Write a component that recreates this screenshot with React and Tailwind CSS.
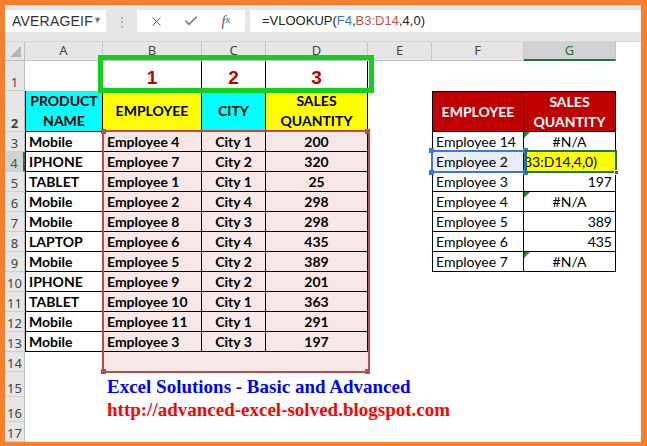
import { X, Check } from "lucide-react";

const cal = { fontFamily: "Lato, 'Open Sans', sans-serif" };

const data = [
  ["Mobile", "Employee 4", "City 1", "200"],
  ["IPHONE", "Employee 7", "City 2", "320"],
  ["TABLET", "Employee 1", "City 1", "25"],
  ["Mobile", "Employee 2", "City 4", "298"],
  ["Mobile", "Employee 8", "City 3", "298"],
  ["LAPTOP", "Employee 6", "City 4", "435"],
  ["Mobile", "Employee 5", "City 2", "389"],
  ["IPHONE", "Employee 9", "City 2", "201"],
  ["TABLET", "Employee 10", "City 1", "363"],
  ["Mobile", "Employee 11", "City 1", "291"],
  ["Mobile", "Employee 3", "City 3", "197"],
];

// right lookup table: [name, value, align, error flag]
const lookup = [
  ["Employee 14", "#N/A", "center", true],
  ["Employee 2", null, "left", false],
  ["Employee 3", "197", "right", false],
  ["Employee 4", "#N/A", "center", true],
  ["Employee 5", "389", "right", false],
  ["Employee 6", "435", "right", false],
  ["Employee 7", "#N/A", "center", true],
];

function RowHead({ n, active }) {
  return (
    <div
      className={`w-[20px] shrink-0 flex items-end justify-center pb-[1px] text-[13px] leading-none border-b border-[#cfcfcf] ${
        active
          ? "bg-[#d2d2d2] text-[#217346] border-r-2 border-r-[#217346]"
          : "bg-[#e6e6e6] text-[#444] border-r border-r-[#bfbfbf]"
      }`}
      style={{ fontFamily: "'Noto Sans', sans-serif" }}
    >
      {n}
    </div>
  );
}

function ErrFlag() {
  return (
    <span className="absolute left-0 top-0 w-0 h-0 border-t-[6px] border-r-[6px] border-t-[#1f8a2e] border-r-transparent" />
  );
}

function FormulaBar() {
  return (
    <div className="h-[37px] shrink-0 bg-[#e6e6e6] flex items-start pt-[5px] border-b border-[#d6d6d6]">
      <div className="w-[101px] h-[22px] bg-white flex items-center pl-[7px] pr-[5px] text-[14px] text-[#333]" style={{ fontFamily: "'Liberation Sans', sans-serif" }}>
        <span className="flex-1 tracking-[0.2px]">AVERAGEIF</span>
        <span className="text-[9px] text-[#777]">▼</span>
      </div>
      <div className="w-[31px] h-[22px] flex items-center justify-center text-[#a8a8a8] text-[14px]">⋮</div>
      <div className="w-[108px] h-[22px] bg-white flex items-center">
        <div className="w-[38px] flex justify-center">
          <X size={15} strokeWidth={1.6} color="#6a6a6a" />
        </div>
        <div className="w-[32px] flex justify-center">
          <Check size={16} strokeWidth={2.4} color="#7a7a7a" />
        </div>
        <div className="w-[38px] flex justify-center text-[14px] italic text-[#555]" style={{ fontFamily: "'Liberation Serif', serif" }}>
          f<span className="text-[11px]">x</span>
        </div>
      </div>
      <div className="ml-[5px] flex-1 h-[22px] bg-white flex items-center pl-[12px] text-[13px] text-[#222]" style={{ fontFamily: "'Liberation Sans', sans-serif" }}>
        =VLOOKUP(<span className="text-[#3b6fc6]">F4</span>,<span className="text-[#c0504d]">B3:D14</span>,4,0)
      </div>
    </div>
  );
}

function ColHeaders() {
  const letters = [
    ["A", "w-[78px]"],
    ["B", "w-[99px]"],
    ["C", "w-[64px]"],
    ["D", "w-[102px]"],
    ["E", "w-[64px]"],
    ["F", "w-[92px]"],
  ];
  return (
    <div className="h-[19px] shrink-0 flex text-[13px] text-[#444]" style={{ fontFamily: "'Noto Sans', sans-serif" }}>
      <div className="w-[20px] shrink-0 bg-[#e6e6e6] border-r border-b border-[#bfbfbf] relative">
        <span className="absolute right-[3px] bottom-[3px] w-0 h-0 border-b-[11px] border-l-[11px] border-b-[#b5b5b5] border-l-transparent" />
      </div>
      {letters.map(([l, w]) => (
        <div key={l} className={`${w} shrink-0 bg-[#e6e6e6] border-r border-b border-[#c6c6c6] flex items-center justify-center`}>
          {l}
        </div>
      ))}
      <div className="w-[92px] shrink-0 bg-[#d2d2d2] border-r border-[#c6c6c6] border-b-2 border-b-[#217346] flex items-center justify-center text-[#217346]">
        G
      </div>
      <div className="flex-1 bg-white" />
    </div>
  );
}

export default function App() {
  return (
    <div className="w-[647px] h-[446px] bg-[#f8802a] pt-[5px] pl-[5px] pr-[6px] pb-[4px] relative overflow-hidden">
      <div className="w-full h-full bg-white flex flex-col overflow-hidden text-black" style={cal}>
        <FormulaBar />
        <ColHeaders />

        {/* row 1 */}
        <div className="h-[30px] shrink-0 flex">
          <RowHead n={1} />
          <div className="w-[78px] shrink-0" />
          {[
            ["1", "w-[99px]"],
            ["2", "w-[64px]"],
            ["3", "w-[102px]"],
          ].map(([n, w]) => (
            <div
              key={n}
              className={`${w} shrink-0 border-r border-b border-black flex items-center justify-center pt-[5px] text-[19px] font-bold text-[#c00000]`}
              style={{ fontFamily: "'Liberation Sans', Arial, sans-serif" }}
            >
              {n}
            </div>
          ))}
        </div>

        {/* row 2 */}
        <div className="h-[41px] shrink-0 flex text-[14px] font-bold leading-[20px]">
          <RowHead n={2} />
          <div className="w-[78px] shrink-0 bg-[#00ffff] border-l border-r border-b border-black flex flex-col items-center justify-center">
            <span>PRODUCT</span>
            <span>NAME</span>
          </div>
          <div className="w-[99px] shrink-0 bg-[#ffff00] border-r border-b border-black flex items-center justify-center">
            EMPLOYEE
          </div>
          <div className="w-[64px] shrink-0 bg-[#00ffff] border-r border-b border-black flex items-center justify-center">
            CITY
          </div>
          <div className="w-[102px] shrink-0 bg-[#ffff00] border-r border-b border-black flex flex-col items-center justify-center">
            <span>SALES</span>
            <span>QUANTITY</span>
          </div>
          <div className="w-[64px] shrink-0" />
          <div className="w-[92px] shrink-0 bg-[#c00000] text-white border border-black flex items-center justify-center">
            EMPLOYEE
          </div>
          <div className="w-[92px] shrink-0 bg-[#c00000] text-white border-t border-r border-b border-black flex flex-col items-center justify-center">
            <span>SALES</span>
            <span>QUANTITY</span>
          </div>
        </div>

        {/* rows 3 - 13 */}
        {data.map(([a, b, c, d], i) => {
          const lk = lookup[i];
          return (
            <div key={i} className="h-[20px] shrink-0 flex text-[14px]">
              <RowHead n={i + 3} active={i === 1} />
              <div className="w-[78px] shrink-0 border-l border-r border-b border-black font-bold pl-[3px] flex items-center">{a}</div>
              <div className="w-[99px] shrink-0 bg-[#f8e7e7] border-r border-b border-black font-bold pl-[4px] flex items-center">{b}</div>
              <div className="w-[64px] shrink-0 bg-[#f8e7e7] border-r border-b border-black font-bold flex items-center justify-center">{c}</div>
              <div className="w-[102px] shrink-0 bg-[#f8e7e7] border-r border-b border-black font-bold flex items-center justify-center">{d}</div>
              <div className="w-[64px] shrink-0" />
              {lk ? (
                <>
                  <div className={`w-[92px] shrink-0 border-l border-r border-b border-black pl-[3px] flex items-center ${i === 1 ? "bg-[#e8eefa]" : ""}`}>
                    {lk[0]}
                  </div>
                  <div
                    className={`w-[92px] shrink-0 border-r border-b border-black relative flex items-center px-[3px] ${
                      lk[2] === "center" ? "justify-center" : lk[2] === "right" ? "justify-end" : "justify-start"
                    } ${i === 1 ? "bg-[#ffff00]" : ""}`}
                  >
                    {lk[3] && <ErrFlag />}
                    {lk[1]}
                  </div>
                </>
              ) : (
                <div className="w-[184px] shrink-0" />
              )}
            </div>
          );
        })}

        {/* row 14 */}
        <div className="h-[20px] shrink-0 flex">
          <RowHead n={14} />
          <div className="w-[78px] shrink-0" />
          <div className="w-[265px] shrink-0 bg-[#f8e7e7]" />
        </div>

        {/* rows 15, 16 */}
        <div className="h-[25px] shrink-0 flex">
          <RowHead n={15} />
          <div className="w-[78px] shrink-0" />
          <div
            className="pl-[4px] whitespace-nowrap text-[19px] font-bold text-[#0000ff] flex items-end pb-[1px] leading-none"
            style={{ fontFamily: "'Liberation Serif', 'Times New Roman', serif" }}
          >
            Excel Solutions - Basic and Advanced
          </div>
        </div>
        <div className="h-[25px] shrink-0 flex">
          <RowHead n={16} />
          <div className="w-[78px] shrink-0" />
          <div
            className="pl-[4px] whitespace-nowrap text-[19px] font-bold text-[#ff0000] flex items-end pb-[3px] leading-none"
            style={{ fontFamily: "'Liberation Serif', 'Times New Roman', serif" }}
          >
            http://advanced-excel-solved.blogspot.com
          </div>
        </div>
        <div className="h-[20px] shrink-0 flex">
          <RowHead n={17} />
        </div>
      </div>

      {/* green outline around B1:D1 */}
      <div className="absolute left-[98px] top-[55px] w-[276px] h-[38px] border-[5px] border-[#12d11c]" />

      {/* range highlight B3:D14 */}
      <div className="absolute left-[102px] top-[130px] w-[268px] h-[243px] border-2 border-[#be4b48]" />
      <span className="absolute left-[101px] top-[129px] w-[5px] h-[5px] bg-[#be4b48]" />
      <span className="absolute left-[365px] top-[129px] w-[5px] h-[5px] bg-[#be4b48]" />
      <span className="absolute left-[101px] top-[369px] w-[5px] h-[5px] bg-[#be4b48]" />
      <span className="absolute left-[365px] top-[369px] w-[5px] h-[5px] bg-[#be4b48]" />

      {/* F4 reference highlight */}
      <div className="absolute left-[431px] top-[150px] w-[95px] h-[23px] border-2 border-[#3c78d8]" />
      <span className="absolute left-[429px] top-[148px] w-[5px] h-[5px] bg-[#3c78d8]" />
      <span className="absolute left-[523px] top-[148px] w-[5px] h-[5px] bg-[#3c78d8]" />
      <span className="absolute left-[429px] top-[170px] w-[5px] h-[5px] bg-[#3c78d8]" />
      <span className="absolute left-[523px] top-[170px] w-[5px] h-[5px] bg-[#3c78d8]" />

      {/* G4 edit cell */}
      <div
        className="absolute left-[525px] top-[150px] w-[92px] h-[23px] border-2 border-[#217346] bg-[#ffff00] flex items-center text-[14px] overflow-hidden whitespace-nowrap"
        style={cal}
      >
        <span className="-ml-[3px]">33:D14,4,0)</span>
      </div>
      <span className="absolute left-[614px] top-[170px] w-[5px] h-[5px] bg-[#217346] border border-white" />
    </div>
  );
}
